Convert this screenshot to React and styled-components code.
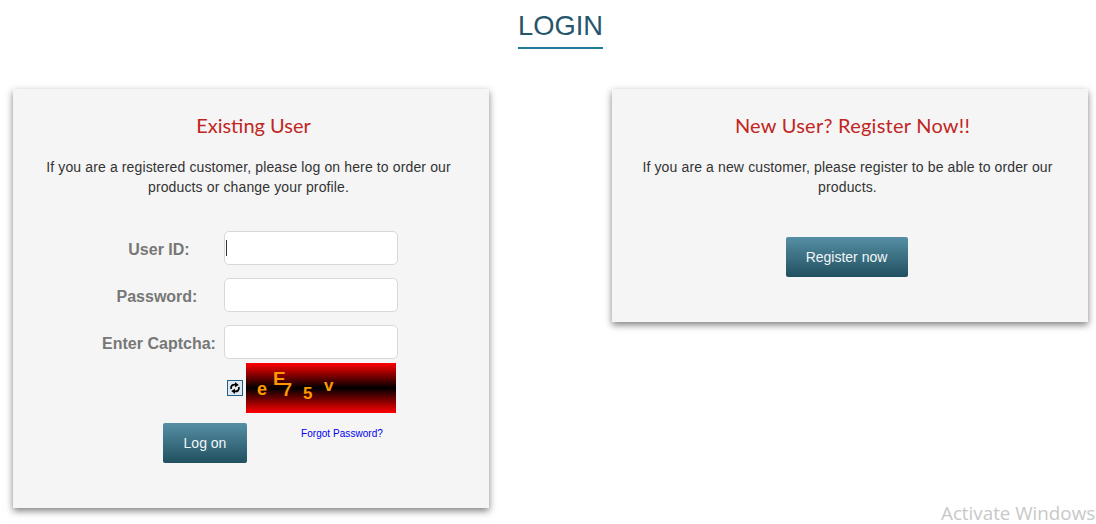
import React from "react";
import styled, { createGlobalStyle } from "styled-components";

const Global = createGlobalStyle`
  html, body { margin: 0; padding: 0; background: #fff; }
  body { font-family: "Liberation Sans", Arial, sans-serif; font-size: 14px; color: #333; overflow: hidden; }
  * { box-sizing: border-box; }
`;

const Page = styled.div`
  position: relative;
  width: 1096px;
  height: 524px;
  overflow: hidden;
  padding-top: 10px;
`;

const TitleWrap = styled.div`
  display: flex;
  justify-content: center;
  padding-left: 25px;
  height: 79px;
  align-items: flex-start;
`;

const Title = styled.h1`
  margin: 0;
  font-weight: 400;
  font-size: 27.3px;
  line-height: 32px;
  color: #25566b;
  padding-bottom: 5px;
  border-bottom: 2px solid #20789a;
`;

const Columns = styled.div`
  display: grid;
  grid-template-columns: 476px 476px;
  column-gap: 123px;
  padding-left: 13px;
  align-items: start;
`;

const Panel = styled.section`
  background: #f5f5f5;
  height: ${(p) => p.$height}px;
  padding-top: 24px;
  box-shadow: 0 3px 7px rgba(0, 0, 0, 0.5);
  text-align: center;
`;

const Heading = styled.h2`
  margin: 0;
  padding-left: 5px;
  font-family: Lato, Carlito, sans-serif;
  font-weight: 400;
  font-size: 20px;
  line-height: 24px;
  letter-spacing: ${(p) => p.$spacing || 0}px;
  color: #c0261f;
`;

const Intro = styled.p`
  margin: 20px 0 0;
  padding: 0 35px 0 30px;
  font-size: 14px;
  line-height: 20px;
  letter-spacing: 0.13px;
  color: #333;
`;

const Form = styled.form`
  display: grid;
  grid-template-columns: 124px 174px;
  grid-auto-rows: 34px;
  row-gap: 13px;
  margin: 34px 0 0 87px;
  text-align: left;
`;

const Label = styled.label`
  font-size: 16px;
  font-weight: 700;
  color: #777;
  line-height: 38px;
  text-align: center;
  padding-right: ${(p) => p.$inset}px;
  white-space: nowrap;
`;

const Field = styled.div`
  position: relative;
  height: 34px;
`;

const Input = styled.input`
  display: block;
  width: 174px;
  height: 34px;
  background: #fff;
  border: 1px solid #d8d8d8;
  border-radius: 5px;
  outline: none;
  padding: 0 12px;
`;

const Caret = styled.span`
  position: absolute;
  left: 2px;
  top: 9px;
  width: 1px;
  height: 16px;
  background: #333;
`;

const CaptchaRow = styled.div`
  display: flex;
  align-items: flex-start;
  margin: 4px 0 0 214px;
  height: 50px;
`;

const RefreshBox = styled.button`
  width: 16px;
  height: 16px;
  margin: 17px 3px 0 0;
  padding: 0;
  border: 1px solid #1f5f8b;
  background: #dfe9f2;
  display: flex;
  align-items: center;
  justify-content: center;
`;

const Captcha = styled.div`
  position: relative;
  width: 150px;
  height: 50px;
  background: linear-gradient(#ff0000, #000 50%, #ff0000);
`;

const CaptchaChar = styled.span`
  position: absolute;
  left: ${(p) => p.$x}px;
  top: ${(p) => p.$y}px;
  font-size: ${(p) => p.$size}px;
  line-height: 1;
  font-weight: 700;
  color: #ff9900;
`;

const ActionRow = styled.div`
  display: flex;
  align-items: flex-start;
  margin: 10px 0 0 150px;
`;

const Button = styled.button`
  width: ${(p) => p.$width}px;
  height: 40px;
  padding: 0;
  font-family: "Liberation Sans", Arial, sans-serif;
  font-size: 14px;
  color: #f2f6f8;
  border: 0;
  border-radius: 2px;
  background: linear-gradient(#568fa5, #21505f);
`;

const Forgot = styled.a`
  margin: 5px 0 0 54px;
  font-size: 10px;
  line-height: 12px;
  letter-spacing: 0.05px;
  color: #0000ee;
  text-decoration: none;
  white-space: nowrap;
`;

const RegisterRow = styled.div`
  display: flex;
  justify-content: center;
  margin-top: 40px;
  padding-right: 7px;
  width: 476px;
`;

const Watermark = styled.div`
  position: absolute;
  left: 941px;
  top: 499px;
  font-family: "Open Sans", sans-serif;
  font-size: 18.8px;
  line-height: 28px;
  color: #c8c8c8;
  white-space: nowrap;
`;

const chars = [
  { c: "e", x: 11, y: 17, size: 18 },
  { c: "E", x: 27, y: 6, size: 19 },
  { c: "7", x: 36, y: 18, size: 18 },
  { c: "5", x: 57, y: 22, size: 17 },
  { c: "v", x: 78, y: 14, size: 17 },
];

function RefreshIcon() {
  return (
    <svg width="12" height="12" viewBox="0 0 12 12" aria-hidden="true">
      <path d="M2.2 7 C1.4 4 3.6 2.2 6.5 2.6" fill="none" stroke="#000" strokeWidth="1.8" />
      <path d="M6 0 L9.8 3 L6 5.2 Z" fill="#000" />
      <path d="M9.8 5 C10.6 8 8.4 9.8 5.5 9.4" fill="none" stroke="#000" strokeWidth="1.8" />
      <path d="M6 12 L2.2 9 L6 6.8 Z" fill="#000" />
    </svg>
  );
}

export default function App() {
  return (
    <Page>
      <Global />
      <TitleWrap>
        <Title>LOGIN</Title>
      </TitleWrap>
      <Columns>
        <Panel $height={419}>
          <Heading>Existing User</Heading>
          <Intro>
            If you are a registered customer, please log on here to order our products or change your profile.
          </Intro>
          <Form onSubmit={(e) => e.preventDefault()}>
            <Label $inset={6}>User ID:</Label>
            <Field>
              <Input type="text" />
              <Caret />
            </Field>
            <Label $inset={10}>Password:</Label>
            <Field>
              <Input type="password" />
            </Field>
            <Label $inset={6}>Enter Captcha:</Label>
            <Field>
              <Input type="text" />
            </Field>
          </Form>
          <CaptchaRow>
            <RefreshBox type="button" aria-label="Refresh captcha">
              <RefreshIcon />
            </RefreshBox>
            <Captcha>
              {chars.map((ch) => (
                <CaptchaChar key={ch.c} $x={ch.x} $y={ch.y} $size={ch.size}>
                  {ch.c}
                </CaptchaChar>
              ))}
            </Captcha>
          </CaptchaRow>
          <ActionRow>
            <Button type="button" $width={84}>Log on</Button>
            <Forgot href="#">Forgot Password?</Forgot>
          </ActionRow>
        </Panel>
        <Panel $height={233}>
          <Heading $spacing={0.25}>New User? Register Now!!</Heading>
          <Intro>If you are a new customer, please register to be able to order our products.</Intro>
          <RegisterRow>
            <Button type="button" $width={122}>Register now</Button>
          </RegisterRow>
        </Panel>
      </Columns>
      <Watermark>Activate Windows</Watermark>
    </Page>
  );
}
